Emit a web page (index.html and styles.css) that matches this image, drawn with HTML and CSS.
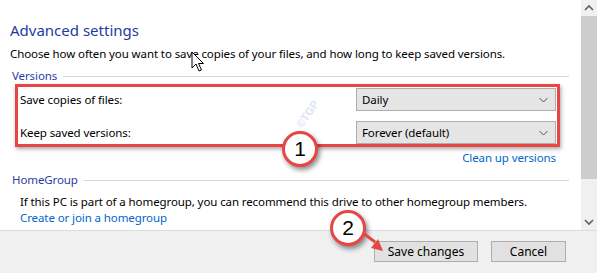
FILE: index.html
```html
<!DOCTYPE html>
<html lang="en">
<head>
    <meta charset="UTF-8">
    <title>Advanced settings</title>
    <link rel="stylesheet" href="styles.css">
</head>
<body>
    <div class="window">
        <div class="content">
            <h1>Advanced settings</h1>
            <p class="intro">Choose how often you want to save copies of your files, and how long to keep saved versions.</p>

            <div class="group-title"><span>Versions</span></div>
            <div class="highlight">
                <div class="row">
                    <label>Save copies of files:</label>
                    <div class="select">Daily
                        <svg class="chev" width="9" height="6" viewBox="0 0 9 6"><path d="M0.5 1 L4.5 5 L8.5 1" fill="none" stroke="#555" stroke-width="1"/></svg>
                    </div>
                </div>
                <div class="row">
                    <label>Keep saved versions:</label>
                    <div class="select">Forever (default)
                        <svg class="chev" width="9" height="6" viewBox="0 0 9 6"><path d="M0.5 1 L4.5 5 L8.5 1" fill="none" stroke="#555" stroke-width="1"/></svg>
                    </div>
                </div>
            </div>
            <div class="link-row"><a href="#">Clean up versions</a></div>

            <div class="group-title homegroup"><span>HomeGroup</span></div>
            <p class="note">If this PC is part of a homegroup, you can recommend this drive to other homegroup members.</p>
            <p class="note"><a href="#">Create or join a homegroup</a></p>
        </div>

        <div class="scrollbar">
            <svg width="16" height="16" viewBox="0 0 16 16"><path d="M4 10 L8 6 L12 10" fill="none" stroke="#606060" stroke-width="1.6"/></svg>
            <div class="thumb"></div>
            <div class="track"></div>
            <svg width="16" height="16" viewBox="0 0 16 16"><path d="M4 6 L8 10 L12 6" fill="none" stroke="#606060" stroke-width="1.6"/></svg>
        </div>

        <div class="footer">
            <button class="btn save">Save changes</button>
            <button class="btn">Cancel</button>
        </div>
    </div>

    <!-- annotations laid over the dialog -->
    <div class="watermark">©TGP</div>
    <div class="badge badge-1">1</div>
    <div class="badge badge-2">2</div>
    <svg class="arrow" width="40" height="30" viewBox="0 0 40 30">
        <path d="M2 2 L14 11" stroke="#e84545" stroke-width="3" fill="none"/>
        <path d="M22 20 L10 17 L17 8 Z" fill="#e84545"/>
    </svg>
    <svg class="cursor" width="14" height="22" viewBox="0 0 14 22">
        <path d="M1 1 L1 17 L5 13 L8 20 L10.5 19 L7.5 12.5 L12.5 12.5 Z" fill="#fff" stroke="#000" stroke-width="1"/>
    </svg>
</body>
</html>
```

FILE: styles.css
```css
body {
    margin: 0;
    font-family: "Segoe UI", "Noto Sans", sans-serif;
    font-size: 11.5px;
    letter-spacing: -0.1px;
    color: #000;
    overflow: hidden;
    position: relative;
}
.window {
    width: 597px;
    height: 273px;
    display: grid;
    grid-template-columns: 1fr 16px;
    grid-template-rows: 230px 43px;
    background: #fff;
}
.content {
    padding: 0 12px 0 10px;
    overflow: hidden;
}
h1 {
    margin: 21px 0 0;
    font-size: 15px;
    line-height: 19px;
    font-weight: normal;
    letter-spacing: 0;
    color: #1e3c9e;
}
.intro {
    margin: 6px 0 0;
    line-height: 16px;
}
.group-title {
    display: flex;
    align-items: center;
    gap: 6px;
    margin: 6px 0 0 2px;
    line-height: 16px;
    color: #2b3ca3;
}
.group-title::after {
    content: "";
    flex: 1;
    border-top: 1px solid #d5d5d5;
}
.highlight {
    margin: 0 9px 0 5px;
    border: 3px solid #e84545;
    padding: 1px 1px 0 2px;
    box-shadow: 1px 2px 4px rgba(0, 0, 0, 0.35);
    display: flex;
    flex-direction: column;
    gap: 10px;
}
.row {
    display: flex;
    justify-content: space-between;
    align-items: center;
}
.select {
    box-sizing: border-box;
    width: 200px;
    height: 23px;
    border: 1px solid #adadad;
    background: #e5e5e5;
    display: flex;
    align-items: center;
    justify-content: space-between;
    padding: 0 7px 0 5px;
}
.link-row {
    margin: 3px 13px 0 0;
    text-align: right;
    line-height: 16px;
}
a {
    color: #0066cc;
    text-decoration: none;
}
.homegroup {
    margin-top: 6px;
}
.note {
    margin: 0 0 0 10px;
    line-height: 16px;
}
.homegroup + .note {
    margin-top: 6px;
}
.scrollbar {
    background: #f0f0f0;
    display: flex;
    flex-direction: column;
    align-items: center;
}
.thumb {
    width: 16px;
    height: 163px;
    background: #cdcdcd;
}
.track {
    flex: 1;
}
.footer {
    grid-column: 1 / 3;
    background: #f0f0f0;
    border-top: 1px solid #dcdcdc;
    display: flex;
    justify-content: flex-end;
    align-items: flex-start;
    gap: 13px;
    padding: 10px 31px 0 0;
}
.btn {
    font: inherit;
    font-size: 12px;
    height: 21px;
    min-width: 75px;
    background: #e1e1e1;
    border: 1px solid #adadad;
    padding: 0 10px;
}
.save {
    width: 104px;
}
.badge {
    position: absolute;
    width: 30px;
    height: 30px;
    border: 3px solid #e84545;
    border-radius: 50%;
    background: #fff;
    color: #000;
    font-family: "Liberation Sans", Arial, sans-serif;
    font-size: 21px;
    line-height: 30px;
    letter-spacing: 0;
    text-align: center;
    box-shadow: 2px 3px 5px rgba(0, 0, 0, 0.45);
}
.badge-1 {
    left: 282px;
    top: 131px;
}
.badge-2 {
    left: 330px;
    top: 210px;
}
.arrow {
    position: absolute;
    left: 361px;
    top: 231px;
}
.watermark {
    position: absolute;
    left: 292px;
    top: 108px;
    transform: rotate(-55deg);
    font-family: "Liberation Sans", Arial, sans-serif;
    font-weight: bold;
    font-size: 11px;
    color: #dde5f2;
}
.cursor {
    position: absolute;
    left: 191px;
    top: 51px;
}
```
